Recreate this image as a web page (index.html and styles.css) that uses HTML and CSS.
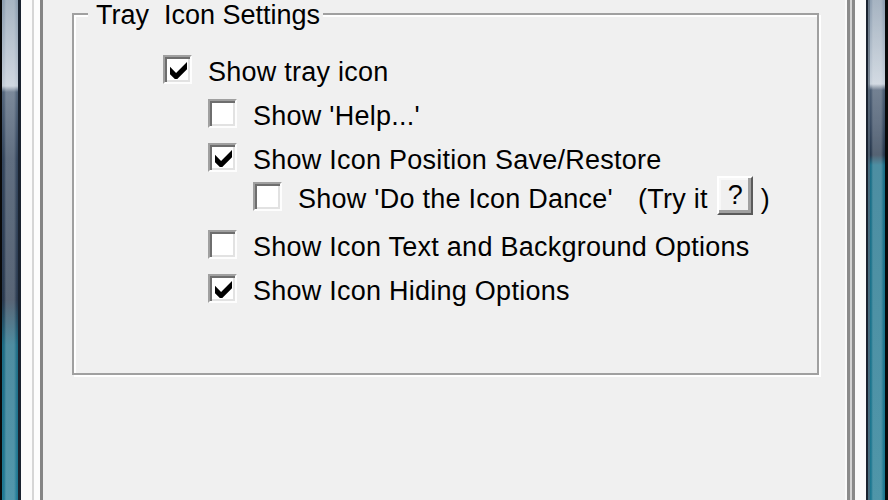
FILE: index.html
```html
<!DOCTYPE html>
<html lang="en">
<head>
<meta charset="utf-8">
<title>Tray Icon Settings</title>
<link rel="stylesheet" href="styles.css">
</head>
<body>
<div class="window">
  <div class="glass glass-left"></div>
  <div class="edge edge-left"></div>
  <main class="dialog">
    <section class="group">
      <span class="legend">Tray&nbsp; Icon Settings</span>
      <div class="options">
        <label class="opt">
          <span class="cb"><svg viewBox="0 0 7 7"><polygon points="0,2 2.5,4.5 7,0 7,3 2.5,7.5 0,5"/></svg></span>
          <span class="txt">Show tray icon</span>
        </label>
        <label class="opt lvl1">
          <span class="cb"></span>
          <span class="txt">Show 'Help...'</span>
        </label>
        <label class="opt lvl1">
          <span class="cb"><svg viewBox="0 0 7 7"><polygon points="0,2 2.5,4.5 7,0 7,3 2.5,7.5 0,5"/></svg></span>
          <span class="txt">Show Icon Position Save/Restore</span>
        </label>
        <div class="opt lvl2 nested">
          <label class="opt">
            <span class="cb"></span>
            <span class="txt">Show 'Do the Icon Dance'</span>
          </label>
          <span class="txt try">(Try it</span>
          <button class="btn" type="button">?</button>
          <span class="txt paren">)</span>
        </div>
        <label class="opt lvl1">
          <span class="cb"></span>
          <span class="txt">Show Icon Text and Background Options</span>
        </label>
        <label class="opt lvl1">
          <span class="cb"><svg viewBox="0 0 7 7"><polygon points="0,2 2.5,4.5 7,0 7,3 2.5,7.5 0,5"/></svg></span>
          <span class="txt">Show Icon Hiding Options</span>
        </label>
      </div>
    </section>
  </main>
  <div class="edge edge-right"></div>
  <div class="glass glass-right"></div>
</div>
</body>
</html>
```

FILE: styles.css
```css
html, body {
  margin: 0;
  height: 500px;
  overflow: hidden;
}

body {
  font-family: "Liberation Sans", Arial, sans-serif;
  font-size: 27px;
  letter-spacing: 0.25px;
  color: #000;
  background: #f0f0f0;
}

.window {
  display: flex;
  height: 500px;
}

.glass,
.edge {
  flex: none;
}

.glass-left {
  width: 21px;
  background:
    linear-gradient(to right, #0a0a0a 0 2px, transparent 2px 18px, #1a2330 18px 21px),
    linear-gradient(to right, rgba(255,255,255,0) 0 4px, rgba(255,255,255,.22) 6px 14px, rgba(255,255,255,0) 17px),
    linear-gradient(to bottom, #8fa0b2 0, #c3cdd8 86px, #56687e 92px, #34465d 160px, #2a3a50 300px, #1e6d86 345px, #217a95 500px);
}

.edge-left {
  width: 22px;
  background: linear-gradient(to right, #fbfbfb 0 11px, #d6d6d6 11px 13px, #fdfdfd 13px 19px, #858585 19px 22px);
}

.dialog {
  flex: 1;
  background: #f0f0f0;
  padding: 13px 26px 0 29px;
}

.edge-right {
  width: 23px;
  background: linear-gradient(to right, #fafafa 0 2px, #8b8b8b 2px 5px, #d3d3d3 5px 7px, #898989 7px 10px, #fafafa 10px 21px, #1a2330 21px 23px);
}

.glass-right {
  width: 20px;
  background:
    linear-gradient(to right, rgba(90,105,120,.7) 0 2px, transparent 2px 17px, #0a0a0a 17px 20px),
    linear-gradient(to right, rgba(255,255,255,0) 0 3px, rgba(255,255,255,.22) 5px 13px, rgba(255,255,255,0) 16px),
    linear-gradient(to bottom, #8d9eb0 0, #c6d0da 84px, #4c5e74 90px, #3a4c63 125px, #26374c 155px, #1b6f88 165px, #1d7891 500px);
}

/* Group box (etched frame) */
.group {
  position: relative;
  box-sizing: border-box;
  height: 362px;
  border: 2px solid #a0a0a0;
  box-shadow: inset 2px 2px 0 #fff, 2px 2px 0 #fff;
}

.legend {
  position: absolute;
  top: -15px;
  left: 14px;
  padding: 0 3px 0 8px;
  line-height: 30px;
  letter-spacing: 0;
  background: #f0f0f0;
  white-space: nowrap;
}

.options {
  display: flex;
  flex-direction: column;
  gap: 15px;
  padding: 40px 0 0 89px;
}

.opt {
  display: flex;
  align-items: flex-start;
  height: 29px;
}

.lvl1 {
  margin-left: 45px;
}

.lvl2 {
  margin-left: 90px;
}

.nested {
  margin-top: -5px;
  margin-bottom: 4px;
}

.cb {
  flex: none;
  box-sizing: border-box;
  width: 29px;
  height: 29px;
  margin-right: 16px;
  border: 2px solid;
  border-color: #a0a0a0 #fdfdfd #fdfdfd #a0a0a0;
  box-shadow: inset 2px 2px 0 #6e6e6e, inset -2px -2px 0 #e2e2e2;
  background: #fff;
}

.cb svg {
  display: block;
  width: 17px;
  height: 17px;
  margin: 5px 0 0 5px;
  fill: #000;
}

.txt {
  line-height: 35px;
  white-space: nowrap;
}

.try {
  margin-left: 25px;
}

.btn {
  flex: none;
  box-sizing: border-box;
  width: 36px;
  height: 39px;
  margin: -6px 0 0 9px;
  padding: 0 0 0 1px;
  font: inherit;
  line-height: 33px;
  color: #000;
  background: #f0f0f0;
  border: 2px solid;
  border-color: #fff #5a5a5a #5a5a5a #fff;
  box-shadow: inset -3px -3px 0 #a0a0a0, inset 2px 2px 0 #f8f8f8;
}

.paren {
  margin-left: 8px;
}
```
